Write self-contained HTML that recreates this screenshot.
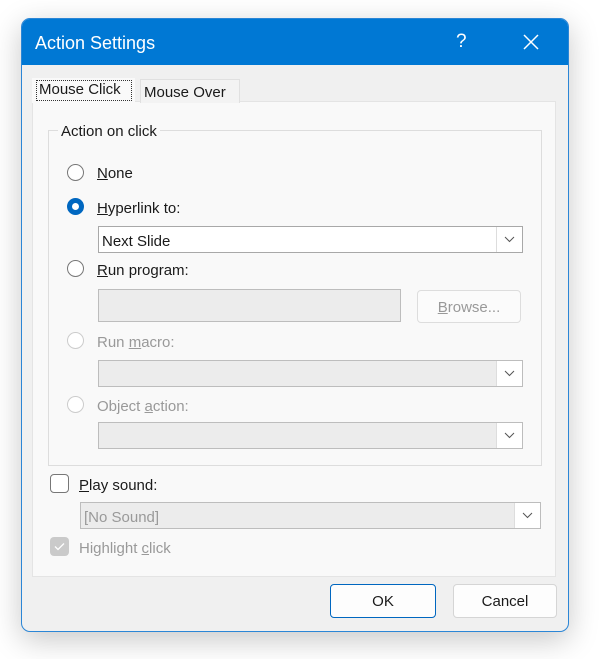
<!DOCTYPE html><html><head><style>
body{margin:0;width:600px;height:659px;background:#fff;font-family:"Liberation Sans",sans-serif;font-size:15px;color:#1a1a1a;position:relative;overflow:hidden}
.a{position:absolute}
.dlg{left:21px;top:18px;width:546px;height:612px;border:1px solid #2b86d6;border-radius:9px;background:#f0f0f0;box-shadow:0 8px 30px rgba(0,0,0,.22);overflow:hidden}
.rad{width:17px;height:17px;border:1px solid #777;border-radius:50%;background:#fff;box-sizing:border-box}
.rad.d{border-color:#ccc}
.combo{border:1px solid #a8a8a8;background:#fff;box-sizing:border-box}
.combo.g{background:#ececec;border-color:#bdbdbd}
.combo .arr{position:absolute;right:0;top:0;bottom:0;width:25px;background:#fff;border-left:1px solid #ddd}
.g2{color:#999}
u{text-decoration:underline}
</style></head><body>
<div class="a dlg">
 <div class="a" style="left:0;top:0;width:546px;height:46px;background:#0078d4"></div>
 <div class="a" style="left:13px;top:14px;color:#fff;font-size:18px">Action Settings</div>
 <div class="a" style="left:434px;top:12px;color:#fff;font-size:19px">?</div>
 <svg class="a" style="left:500px;top:14px" width="18" height="18"><path d="M2 2L16 16M16 2L2 16" stroke="#fff" stroke-width="1.5"/></svg>
</div>
<div class="a" style="left:32px;top:101px;width:522px;height:474px;background:#f9f9f9;border:1px solid #e4e4e4"></div>
<div class="a" style="left:140px;top:79px;width:98px;height:23px;background:#f3f3f3;border:1px solid #e0e0e0;border-bottom:none"></div>
<div class="a" style="left:144px;top:84px">Mouse Over</div>
<div class="a" style="left:32px;top:78px;width:103px;height:25px;background:#f9f9f9"></div>
<div class="a" style="left:36px;top:80px;width:94px;height:19px;border:1px dotted #333"></div>
<div class="a" style="left:39px;top:81px">Mouse Click</div>
<div class="a" style="left:48px;top:130px;width:492px;height:334px;border:1px solid #ddd"></div>
<div class="a" style="left:58px;top:123px;background:#f9f9f9;padding:0 3px">Action on click</div>
<div class="a rad" style="left:67px;top:164px"></div>
<div class="a" style="left:97px;top:165px"><u>N</u>one</div>
<div class="a rad" style="left:67px;top:198px;border:5px solid #0067c0"></div>
<div class="a" style="left:97px;top:200px"><u>H</u>yperlink to:</div>
<div class="a combo" style="left:98px;top:226px;width:425px;height:27px"><span class="a" style="left:3px;top:6px">Next Slide</span><div class="arr"><svg width="25" height="25"><path d="M8 10l4.5 4.5L17 10" stroke="#555" fill="none"/></svg></div></div>
<div class="a rad" style="left:67px;top:260px"></div>
<div class="a" style="left:97px;top:262px"><u>R</u>un program:</div>
<div class="a combo g" style="left:98px;top:289px;width:303px;height:33px"></div>
<div class="a" style="left:417px;top:290px;width:104px;height:33px;border:1px solid #ddd;border-radius:4px;background:#fbfbfb;box-sizing:border-box;text-align:center;line-height:33px"><span class="g2"><u>B</u>rowse...</span></div>
<div class="a rad d" style="left:67px;top:332px"></div>
<div class="a g2" style="left:97px;top:334px">Run <u>m</u>acro:</div>
<div class="a combo g" style="left:98px;top:360px;width:425px;height:27px"><div class="arr"><svg width="25" height="25"><path d="M8 10l4.5 4.5L17 10" stroke="#555" fill="none"/></svg></div></div>
<div class="a rad d" style="left:67px;top:396px"></div>
<div class="a g2" style="left:97px;top:398px">Object <u>a</u>ction:</div>
<div class="a combo g" style="left:98px;top:422px;width:425px;height:27px"><div class="arr"><svg width="25" height="25"><path d="M8 10l4.5 4.5L17 10" stroke="#555" fill="none"/></svg></div></div>
<div class="a" style="left:50px;top:474px;width:19px;height:19px;border:1px solid #777;border-radius:4px;background:#fff;box-sizing:border-box"></div>
<div class="a" style="left:79px;top:477px"><u>P</u>lay sound:</div>
<div class="a combo g" style="left:80px;top:502px;width:461px;height:27px"><span class="a g2" style="left:3px;top:6px">[No Sound]</span><div class="arr"><svg width="25" height="25"><path d="M8 10l4.5 4.5L17 10" stroke="#555" fill="none"/></svg></div></div>
<div class="a" style="left:50px;top:537px;width:19px;height:19px;border-radius:4px;background:#cacaca"><svg width="19" height="19"><path d="M5 9.5l3 3 6-6" stroke="#fff" fill="none" stroke-width="1.3"/></svg></div>
<div class="a g2" style="left:79px;top:540px">Highlight <u>c</u>lick</div>
<div class="a" style="left:330px;top:584px;width:106px;height:34px;border:1px solid #0067c0;border-radius:4px;background:#fdfdfd;box-sizing:border-box;text-align:center;line-height:34px">OK</div>
<div class="a" style="left:453px;top:584px;width:104px;height:34px;border:1px solid #d5d5d5;border-radius:4px;background:#fdfdfd;box-sizing:border-box;text-align:center;line-height:34px">Cancel</div>
</body></html>
